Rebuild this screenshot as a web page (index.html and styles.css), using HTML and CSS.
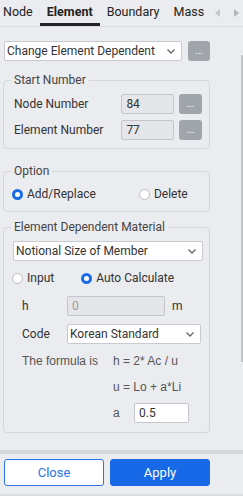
FILE: index.html
```html
<!DOCTYPE html>
<html lang="en">
<head>
    <meta charset="UTF-8">
    <title>Element Dependent</title>
    <link rel="stylesheet" href="styles.css">
</head>
<body>
    <div class="tabs">
        <span class="tab first">Node</span>
        <span class="tab active">Element</span>
        <span class="tab">Boundary</span>
        <span class="tab">Mass</span>
        <span class="arrows">
            <svg width="6" height="8" viewBox="0 0 6 8"><path d="M5 0 L0 4 L5 8 Z" fill="#c4c6ca"/></svg>
            <svg width="6" height="8" viewBox="0 0 6 8"><path d="M0 0 L5 4 L0 8 Z" fill="#b4b6ba"/></svg>
        </span>
    </div>

    <div class="content">
        <div class="top-row">
            <div class="select wide">
                <span>Change Element Dependent</span>
                <svg class="chev" width="8" height="5" viewBox="0 0 8 5"><path d="M0.5 0.5 L4 4 L7.5 0.5" fill="none" stroke="#666" stroke-width="1.3"/></svg>
            </div>
            <button class="dots">...</button>
        </div>

        <fieldset class="group">
            <legend>Start Number</legend>
            <div class="num-row">
                <span class="label">Node Number</span>
                <div class="field disabled small">84</div>
                <button class="dots sm">...</button>
            </div>
            <div class="num-row">
                <span class="label">Element Number</span>
                <div class="field disabled small">77</div>
                <button class="dots sm">...</button>
            </div>
        </fieldset>

        <fieldset class="group option">
            <legend>Option</legend>
            <div class="radio-row">
                <label class="radio on"><i></i>Add/Replace</label>
                <label class="radio delete"><i></i>Delete</label>
            </div>
        </fieldset>

        <fieldset class="group material">
            <legend>Element Dependent Material</legend>
            <div class="select full">
                <span>Notional Size of Member</span>
                <svg class="chev" width="8" height="5" viewBox="0 0 8 5"><path d="M0.5 0.5 L4 4 L7.5 0.5" fill="none" stroke="#666" stroke-width="1.3"/></svg>
            </div>
            <div class="radio-row mode">
                <label class="radio"><i></i>Input</label>
                <label class="radio on auto"><i></i>Auto Calculate</label>
            </div>
            <div class="param-row">
                <span class="plabel">h</span>
                <div class="field disabled hval">0</div>
                <span class="unit">m</span>
            </div>
            <div class="param-row">
                <span class="plabel">Code</span>
                <div class="select code">
                    <span>Korean Standard</span>
                    <svg class="chev" width="8" height="5" viewBox="0 0 8 5"><path d="M0.5 0.5 L4 4 L7.5 0.5" fill="none" stroke="#666" stroke-width="1.3"/></svg>
                </div>
            </div>
            <div class="formula">
                <div class="f-row"><span class="wide-label">The formula is</span><span>h = 2* Ac / u</span></div>
                <div class="f-row"><span class="wide-label"></span><span>u = Lo + a*Li</span></div>
                <div class="f-row"><span class="wide-label"></span><span class="a">a</span><div class="field aval">0.5</div></div>
            </div>
        </fieldset>
    </div>

    <div class="footer">
        <button class="btn close">Close</button>
        <button class="btn apply">Apply</button>
    </div>

    <div class="scroll-thumb"></div>
</body>
</html>
```

FILE: styles.css
```css
body {
    margin: 0;
    width: 243px;
    height: 496px;
    background: #ebecef;
    font-family: "Roboto", "Noto Sans", sans-serif;
    font-size: 12px;
    color: #333;
    position: relative;
    overflow: hidden;
}

/* Tabs */
.tabs {
    display: flex;
    align-items: stretch;
    height: 26px;
    border-bottom: 1px solid #dcdde1;
    overflow: hidden;
}

.tab {
    display: flex;
    align-items: center;
    padding: 0 7px;
    font-size: 12.5px;
    color: #222;
    border-bottom: 3px solid transparent;
}

.tab.first {
    padding-left: 3px;
}

.tab.active {
    font-weight: 700;
    border-bottom-color: #222;
}

.arrows {
    display: flex;
    align-items: center;
    gap: 13px;
    margin-left: 4px;
}

/* Content */
.content {
    padding: 14px 0 0 4px;
    width: 206px;
}

.top-row {
    display: flex;
    gap: 6px;
    margin-bottom: 12px;
}

.select {
    box-sizing: border-box;
    height: 20px;
    background: #fff;
    border: 1px solid #c9cacf;
    border-radius: 2px;
    display: flex;
    align-items: center;
    justify-content: space-between;
    padding: 0 6px 0 2px;
    font-size: 12px;
}

.select.wide {
    width: 179px;
}

.chev {
    margin-top: 1px;
}

.dots {
    box-sizing: border-box;
    width: 22px;
    height: 20px;
    border: none;
    border-radius: 3px;
    background: #a0a4ab;
    color: #fff;
    font-size: 10px;
    padding: 0 0 4px;
    line-height: 20px;
    font-family: inherit;
}

.dots.sm {
    width: 23px;
}

/* Groups */
.group {
    border: 1px solid #d5d6da;
    border-radius: 4px;
    margin: 0 0 0 -1px;
    padding: 0 7px 8px 8px;
    min-width: 0;
}

.group legend {
    padding: 0 3px;
    margin-left: -1px;
    color: #444;
    line-height: 14px;
}

.num-row {
    display: flex;
    align-items: center;
    margin-top: 6px;
}

.num-row:first-of-type {
    margin-top: 7px;
}

.label {
    width: 108px;
    padding-left: 2px;
}

.field {
    box-sizing: border-box;
    height: 20px;
    border: 1px solid #c5c6cb;
    border-radius: 2px;
    padding: 0 4px;
    line-height: 18px;
    background: #fff;
}

.field.disabled {
    background: #e5e6e9;
}

.field.small {
    width: 53px;
    margin-right: 5px;
}

.option {
    margin-top: 15px;
    padding-bottom: 10px;
}

.radio-row {
    display: flex;
    margin-top: 9px;
}

.radio {
    display: flex;
    align-items: center;
    gap: 4px;
}

.radio i {
    box-sizing: border-box;
    width: 11px;
    height: 11px;
    border-radius: 50%;
    background: #fff;
    border: 1px solid #b9bbc0;
}

.radio.on i {
    border: 3px solid #1a6be8;
}

.radio.delete {
    margin-left: 43px;
}

.radio.auto {
    margin-left: 27px;
}

.material {
    margin-top: 8px;
    padding-bottom: 9px;
}

.select.full {
    width: 190px;
    margin-top: 7px;
    margin-left: 1px;
}

.radio-row.mode {
    margin-top: 10px;
}

.param-row {
    display: flex;
    align-items: center;
    padding-left: 10px;
    margin-top: 8px;
}

.mode + .param-row {
    margin-top: 11px;
}

.plabel {
    width: 45px;
}

.field.hval {
    width: 98px;
    color: #9a9b9f;
}

.unit {
    margin-left: 7px;
}

.select.code {
    width: 134px;
}

/* Formula */
.formula {
    padding-left: 10px;
    font-family: "Liberation Sans", Arial, sans-serif;
    color: #555;
    margin-top: 7px;
}

.f-row {
    display: flex;
    align-items: center;
    height: 20px;
    margin-bottom: 6px;
}

.f-row:last-child {
    margin-bottom: 0;
}

.wide-label {
    width: 91px;
}

.a {
    width: 21px;
}

.field.aval {
    width: 55px;
    font-family: "Roboto", sans-serif;
    color: #333;
}

/* Footer */
.footer {
    position: absolute;
    left: 0;
    right: 0;
    top: 450px;
    bottom: 0;
    border-top: 4px solid #d6d7db;
    border-bottom: 2px solid #dcdde1;
    display: flex;
    gap: 6px;
    padding: 5px 0 0 4px;
    box-sizing: border-box;
}

.btn {
    width: 100px;
    height: 27px;
    border-radius: 3px;
    font-family: inherit;
    font-size: 13px;
}

.btn.close {
    background: #fff;
    border: 1px solid #2a74e6;
    color: #2a74e6;
}

.btn.apply {
    background: #1769e8;
    border: 1px solid #1769e8;
    color: #fff;
}

.scroll-thumb {
    position: absolute;
    right: 0;
    top: 55px;
    width: 2px;
    height: 307px;
    background: #c3c4c8;
}
```
